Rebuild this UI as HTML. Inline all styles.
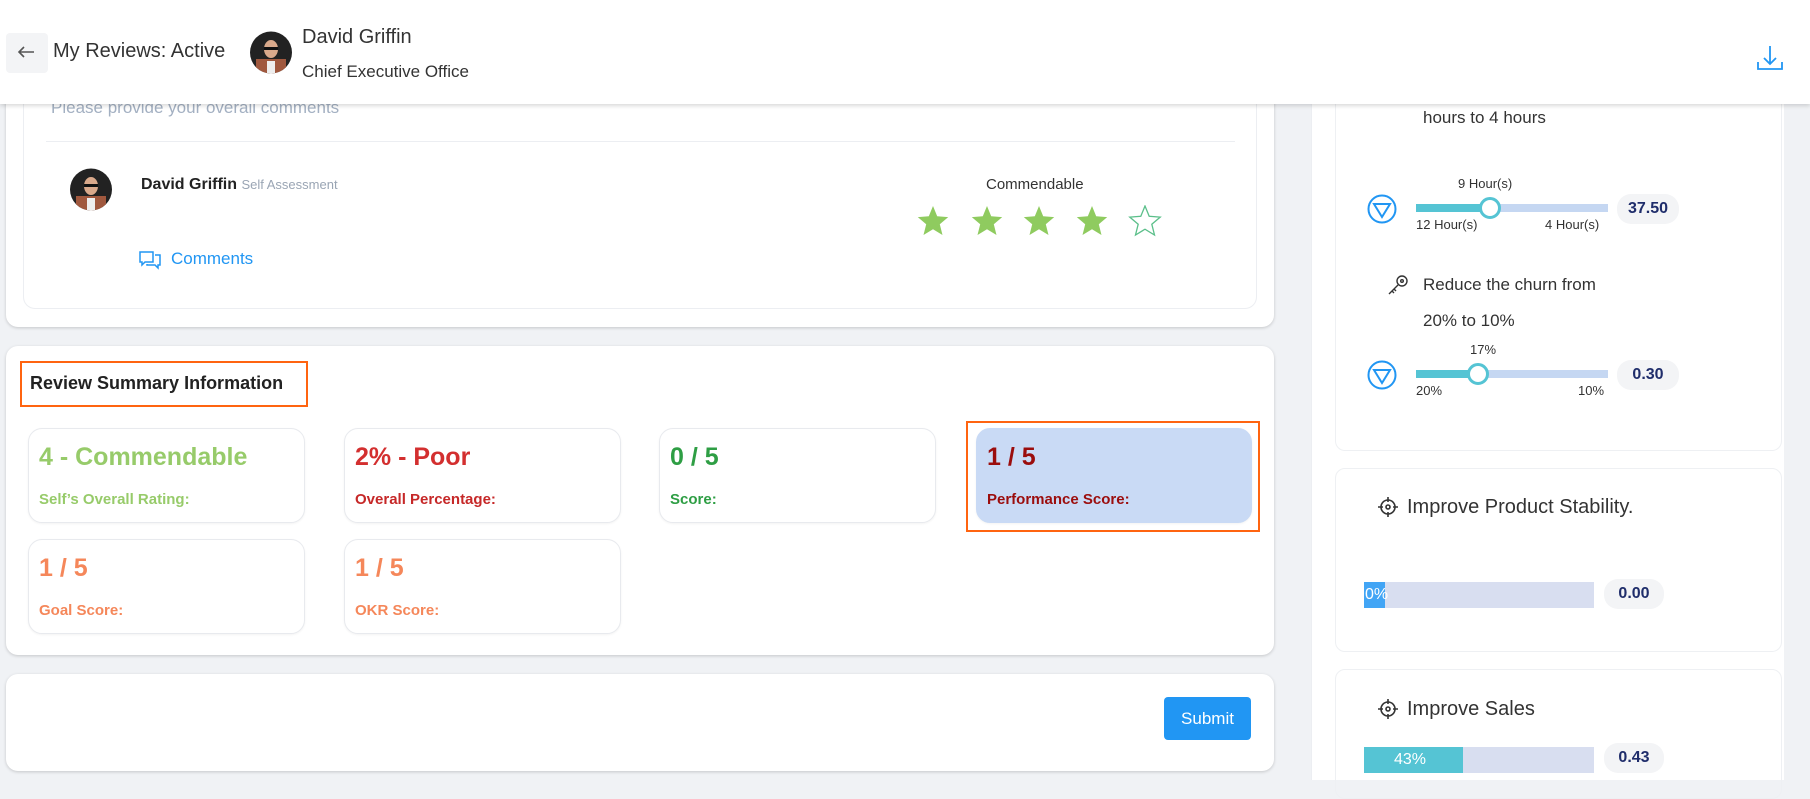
<!DOCTYPE html>
<html><head><meta charset="utf-8"><style>
*{box-sizing:border-box;margin:0;padding:0}
body{width:1810px;height:780px;overflow:hidden;background:#f0f2f5;font-family:"Liberation Sans",sans-serif;position:relative;color:#333}
.a{position:absolute}
.card{position:absolute;background:#fff;border-radius:12px;box-shadow:0 1px 3px rgba(0,0,0,.18)}
.tile{position:absolute;width:277px;height:95px;border:1px solid #e8eaee;border-radius:14px;background:#fff;box-shadow:0 1px 2px rgba(0,0,0,.05)}
.tile .v{position:absolute;left:10px;top:14px;font-size:25px;font-weight:bold}
.tile .l{position:absolute;left:10px;top:62px;font-size:15px;font-weight:bold}
.trk{position:absolute;height:8px;background:#c5d7f2}
.fill{position:absolute;left:0;top:0;height:8px;background:#55c4d4}
.knob{position:absolute;width:22px;height:22px;border:3px solid #55c4d4;background:#fff;border-radius:50%;top:-7px}
.pill{position:absolute;background:#f3f4f6;border-radius:14px;font-weight:bold;color:#1f2d6b;font-size:16px;text-align:center;line-height:30px}
.sm{position:absolute;font-size:13px;color:#333}
.bar{position:absolute;left:1364px;width:230px;height:26px;background:#d8def0}
</style></head><body>

<!-- left cards -->
<div class="card" style="left:6px;top:60px;width:1268px;height:267px"></div>
<div class="a" style="left:23px;top:60px;width:1234px;height:249px;border:1px solid #eceef2;border-top:none;border-radius:0 0 12px 12px;background:#fff"></div>
<div class="a" style="left:51px;top:98px;font-size:17px;color:#a3b0c2">Please provide your overall comments</div>
<div class="a" style="left:46px;top:141px;width:1189px;height:1px;background:#eceef2"></div>
<svg class="a" style="left:70px;top:168px" width="42" height="43" viewBox="0 0 42 43"><defs><clipPath id="c2"><circle cx="21" cy="21.5" r="21"/></clipPath></defs><g clip-path="url(#c2)"><rect width="42" height="43" fill="#222"/><rect x="6" y="28" width="30" height="16" fill="#a0583e"/><rect x="17" y="30" width="8" height="14" fill="#eee"/><ellipse cx="21" cy="18" rx="7" ry="9" fill="#d9a98b"/><rect x="14" y="16" width="14" height="3" fill="#111"/></g></svg>
<div class="a" style="left:141px;top:176px;font-size:16px;font-weight:bold;color:#222">David Griffin <span style="font-weight:normal;font-size:13px;color:#9aa5b4">Self Assessment</span></div>
<svg class="a" style="left:139px;top:250px" width="22" height="20" viewBox="0 0 22 20" fill="none" stroke="#2196f3" stroke-width="1.5"><path d="M1 2h13v10H6l-3 3v-3H1z"/><path d="M16 5h5v10h-2v3l-3-3H8v-1"/></svg>
<div class="a" style="left:171px;top:249px;font-size:17px;color:#2196f3">Comments</div>
<div class="a" style="left:986px;top:176px;font-size:15px;color:#333">Commendable</div>
<svg class="a" style="left:915px;top:205px" width="250" height="34" viewBox="0 0 250 34">
<defs><path id="st" d="M15 1l4.2 10.3 11 .8-8.4 7.1 2.7 10.8L15 24.2 5.5 30l2.7-10.8L-.2 12.1l11-.8z"/></defs>
<use href="#st" x="3" fill="#8fcb5f"/><use href="#st" x="57" fill="#8fcb5f"/><use href="#st" x="109" fill="#8fcb5f"/><use href="#st" x="162" fill="#8fcb5f"/><use href="#st" x="215" fill="none" stroke="#5bbf8a" stroke-width="1.3"/></svg>

<div class="card" style="left:6px;top:346px;width:1268px;height:309px"></div>
<div class="a" style="left:20px;top:361px;width:288px;height:46px;border:2px solid #ff6410"></div>
<div class="a" style="left:30px;top:373px;font-size:18px;font-weight:bold;color:#222">Review Summary Information</div>
<div class="tile" style="left:28px;top:428px"><div class="v" style="color:#97cb6a">4 - Commendable</div><div class="l" style="color:#97cb6a">Self’s Overall Rating:</div></div>
<div class="tile" style="left:344px;top:428px"><div class="v" style="color:#d32f2f">2% - Poor</div><div class="l" style="color:#c62828">Overall Percentage:</div></div>
<div class="tile" style="left:659px;top:428px"><div class="v" style="color:#2e9e44">0 / 5</div><div class="l" style="color:#2e9e44">Score:</div></div>
<div class="a" style="left:966px;top:421px;width:294px;height:111px;border:2px solid #ff6410"></div>
<div class="tile" style="left:976px;top:428px;width:276px;background:#c9daf5;border-color:#c9daf5"><div class="v" style="color:#9b0d0d">1 / 5</div><div class="l" style="color:#9b0d0d">Performance Score:</div></div>
<div class="tile" style="left:28px;top:539px"><div class="v" style="color:#f5875a">1 / 5</div><div class="l" style="color:#f5875a">Goal Score:</div></div>
<div class="tile" style="left:344px;top:539px"><div class="v" style="color:#f5875a">1 / 5</div><div class="l" style="color:#f5875a">OKR Score:</div></div>

<div class="card" style="left:6px;top:674px;width:1268px;height:97px"></div>
<div class="a" style="left:1164px;top:697px;width:87px;height:43px;background:#2196f3;border-radius:4px;color:#fff;font-size:17px;text-align:center;line-height:43px">Submit</div>

<!-- right panel -->
<div class="a" style="left:1311px;top:60px;width:473px;height:720px;background:#fff;border-left:1px solid #eceef2"></div>
<div class="a" style="left:1335px;top:60px;width:447px;height:391px;border:1px solid #eef0f3;border-top:none;border-radius:0 0 10px 10px"></div>
<div class="a" style="left:1423px;top:108px;font-size:17px;color:#333">hours to 4 hours</div>
<svg class="a" style="left:1367px;top:194px" width="30" height="30" viewBox="0 0 30 30" fill="none" stroke="#2196f3" stroke-width="2"><circle cx="15" cy="15" r="13.5"/><path d="M7 10h16L15 23z"/></svg>
<div class="sm" style="left:1458px;top:176px">9 Hour(s)</div>
<div class="trk" style="left:1416px;top:204px;width:192px"><div class="fill" style="width:74px"></div><div class="knob" style="left:63px"></div></div>
<div class="sm" style="left:1416px;top:217px">12 Hour(s)</div>
<div class="sm" style="left:1545px;top:217px">4 Hour(s)</div>
<div class="pill" style="left:1617px;top:194px;width:62px">37.50</div>
<svg class="a" style="left:1387px;top:274px" width="22" height="22" viewBox="0 0 22 22" fill="none" stroke="#333" stroke-width="1.4"><circle cx="15" cy="7" r="5"/><circle cx="15" cy="7" r="1.3"/><path d="M11 11L2 20M5 17l2 2M7 15l2 2"/></svg>
<div class="a" style="left:1423px;top:275px;font-size:17px;color:#333">Reduce the churn from</div>
<div class="a" style="left:1423px;top:311px;font-size:17px;color:#333">20% to 10%</div>
<svg class="a" style="left:1367px;top:360px" width="30" height="30" viewBox="0 0 30 30" fill="none" stroke="#2196f3" stroke-width="2"><circle cx="15" cy="15" r="13.5"/><path d="M7 10h16L15 23z"/></svg>
<div class="sm" style="left:1470px;top:342px">17%</div>
<div class="trk" style="left:1416px;top:370px;width:192px"><div class="fill" style="width:62px"></div><div class="knob" style="left:51px"></div></div>
<div class="sm" style="left:1416px;top:383px">20%</div>
<div class="sm" style="left:1578px;top:383px">10%</div>
<div class="pill" style="left:1617px;top:360px;width:62px">0.30</div>

<div class="a" style="left:1335px;top:468px;width:447px;height:184px;border:1px solid #eef0f3;border-radius:10px"></div>
<svg class="a" style="left:1377px;top:495px" width="22" height="24" viewBox="0 0 22 24" fill="none" stroke="#333" stroke-width="1.6"><circle cx="11" cy="12" r="7"/><circle cx="11" cy="12" r="2"/><path d="M11 2v5M11 17v5M1 12h5M16 12h5"/></svg>
<div class="a" style="left:1407px;top:496px;font-size:20px;color:#333">Improve Product Stability.</div>
<div class="bar" style="top:582px"><div class="a" style="left:0;top:0;width:21px;height:26px;background:#42a5f5"></div><div class="a" style="left:1px;top:4px;color:#fff;font-size:16px">0%</div></div>
<div class="pill" style="left:1604px;top:579px;width:60px">0.00</div>

<div class="a" style="left:1335px;top:669px;width:447px;height:130px;border:1px solid #eef0f3;border-radius:10px"></div>
<svg class="a" style="left:1377px;top:697px" width="22" height="24" viewBox="0 0 22 24" fill="none" stroke="#333" stroke-width="1.6"><circle cx="11" cy="12" r="7"/><circle cx="11" cy="12" r="2"/><path d="M11 2v5M11 17v5M1 12h5M16 12h5"/></svg>
<div class="a" style="left:1407px;top:698px;font-size:20px;color:#333">Improve Sales</div>
<div class="bar" style="top:747px"><div class="a" style="left:0;top:0;width:99px;height:26px;background:#55c4d4"></div><div class="a" style="left:30px;top:4px;color:#fff;font-size:16px">43%</div></div>
<div class="pill" style="left:1604px;top:743px;width:60px">0.43</div>

<!-- header -->
<div class="a" style="left:0;top:0;width:1810px;height:104px;background:#fff;box-shadow:0 2px 4px rgba(0,0,0,.15)"></div>
<div class="a" style="left:6px;top:33px;width:42px;height:40px;background:#f3f4f6;border-radius:4px"></div>
<svg class="a" style="left:16px;top:44px" width="20" height="16" viewBox="0 0 20 16" fill="none" stroke="#555" stroke-width="1.6"><path d="M18 8H3M8 3L3 8l5 5"/></svg>
<div class="a" style="left:53px;top:40px;font-size:20px;color:#333">My Reviews: Active</div>
<svg class="a" style="left:250px;top:31px" width="42" height="43" viewBox="0 0 42 43"><defs><clipPath id="c1"><circle cx="21" cy="21.5" r="21"/></clipPath></defs><g clip-path="url(#c1)"><rect width="42" height="43" fill="#222"/><rect x="6" y="28" width="30" height="16" fill="#a0583e"/><rect x="17" y="30" width="8" height="14" fill="#eee"/><ellipse cx="21" cy="18" rx="7" ry="9" fill="#d9a98b"/><rect x="14" y="16" width="14" height="3" fill="#111"/></g></svg>
<div class="a" style="left:302px;top:26px;font-size:20px;color:#333">David Griffin</div>
<div class="a" style="left:302px;top:62px;font-size:17px;color:#333">Chief Executive Office</div>
<svg class="a" style="left:1756px;top:45px" width="28" height="26" viewBox="0 0 28 26" fill="none" stroke="#2196f3" stroke-width="1.8"><path d="M14 1v18M8 13l6 6 6-6M2 17v7h24v-7"/></svg>
</body></html>
